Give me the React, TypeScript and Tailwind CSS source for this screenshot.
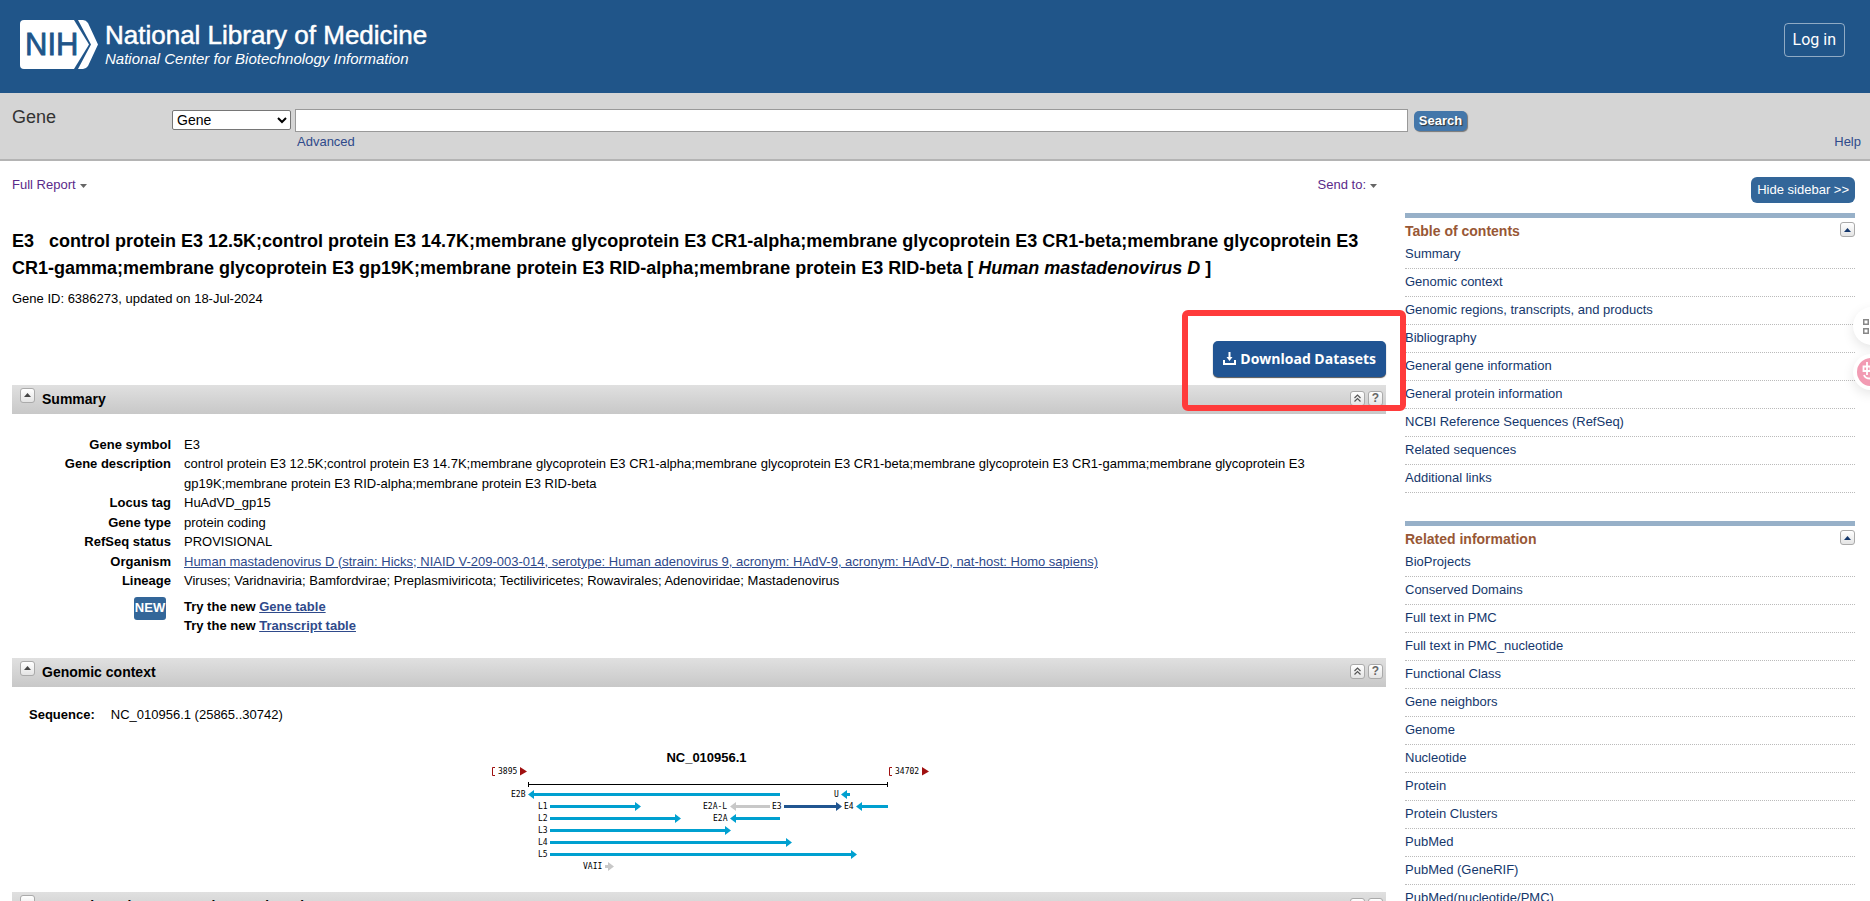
import { useState } from 'react'
import type { ReactNode } from 'react'

const TOC = [
  'Summary',
  'Genomic context',
  'Genomic regions, transcripts, and products',
  'Bibliography',
  'General gene information',
  'General protein information',
  'NCBI Reference Sequences (RefSeq)',
  'Related sequences',
  'Additional links',
]

const RELATED = [
  'BioProjects',
  'Conserved Domains',
  'Full text in PMC',
  'Full text in PMC_nucleotide',
  'Functional Class',
  'Gene neighbors',
  'Genome',
  'Nucleotide',
  'Protein',
  'Protein Clusters',
  'PubMed',
  'PubMed (GeneRIF)',
  'PubMed(nucleotide/PMC)',
]

const DESCRIPTION =
  'control protein E3 12.5K;control protein E3 14.7K;membrane glycoprotein E3 CR1-alpha;membrane glycoprotein E3 CR1-beta;membrane glycoprotein E3 CR1-gamma;membrane glycoprotein E3 gp19K;membrane protein E3 RID-alpha;membrane protein E3 RID-beta'

const CYAN = '#00a0d0'
const NAVY = '#205590'
const GREY = '#c8c8c8'

interface Gene {
  label: string
  labelX: number
  y: number
  from: number
  to: number
  color: string
}

// from -> to gives the strand direction
const GENES: Gene[] = [
  { label: 'E2B', labelX: 41, y: 64, from: 310, to: 58, color: CYAN },
  { label: 'U', labelX: 364, y: 64, from: 380, to: 371, color: CYAN },
  { label: 'L1', labelX: 68, y: 76, from: 80, to: 171, color: CYAN },
  { label: 'E2A-L', labelX: 233, y: 76, from: 300, to: 260, color: GREY },
  { label: 'E3', labelX: 302, y: 76, from: 314, to: 372, color: NAVY },
  { label: 'E4', labelX: 374, y: 76, from: 418, to: 386, color: CYAN },
  { label: 'L2', labelX: 68, y: 88, from: 80, to: 211, color: CYAN },
  { label: 'E2A', labelX: 243, y: 88, from: 310, to: 260, color: CYAN },
  { label: 'L3', labelX: 68, y: 100, from: 80, to: 261, color: CYAN },
  { label: 'L4', labelX: 68, y: 112, from: 80, to: 322, color: CYAN },
  { label: 'L5', labelX: 68, y: 124, from: 80, to: 387, color: CYAN },
  { label: 'VAII', labelX: 113, y: 136, from: 135, to: 144, color: GREY },
]

function GeneArrow({ gene }: { gene: Gene }) {
  const dir = gene.to > gene.from ? 1 : -1
  const neck = gene.to - dir * 6
  return (
    <g>
      <text x={gene.labelX} y={gene.y + 4} fill="#000">
        {gene.label}
      </text>
      <rect
        x={Math.min(gene.from, neck)}
        y={gene.y}
        width={Math.abs(neck - gene.from)}
        height={3}
        fill={gene.color}
      />
      <polygon
        points={`${neck},${gene.y - 3} ${gene.to},${gene.y + 1.5} ${neck},${gene.y + 6}`}
        fill={gene.color}
      />
    </g>
  )
}

function GenomeMap() {
  return (
    <svg width="470" height="150" viewBox="0 0 470 150" role="img" aria-label="NC_010956.1">
      <text
        x="236.5"
        y="33"
        textAnchor="middle"
        className="font-['Liberation_Sans',Arial,sans-serif] text-[13px] font-bold"
      >
        NC_010956.1
      </text>
      <g className="font-['DejaVu_Sans_Mono',monospace] text-[8px]">
        <path d="M25 38.5H22.5V46.5H25M422 38.5H419.5V46.5H422" fill="none" stroke="#a01010" />
        <path d="M50 38V46.500L57 42.500zM452 38V46.500L459 42.500z" fill="#a01010" />
        <text x="28" y="45">3895</text>
        <text x="425" y="45">34702</text>
        <path d="M58.500 53V58M417.500 53V58M58 55.500H418" fill="none" stroke="#000" />
        {GENES.map((gene) => (
          <GeneArrow key={gene.label} gene={gene} />
        ))}
      </g>
    </svg>
  )
}

function NihLogo() {
  return (
    <svg width="430" height="54" viewBox="0 0 430 54">
      <path d="M4 0H54L69 24.500L54 49H4Q0 49 0 45V4Q0 0 4 0z" fill="#fff" />
      <path d="M58 0H63Q66 0 68 3L78 24.500L68 46Q66 49 63 49H58L71 24.500z" fill="#fff" />
      <g className="font-['Liberation_Sans',Arial,sans-serif]">
        <text x="5" y="35" fill="#205589" stroke="#205589" strokeWidth="0.800" className="text-[31px]">
          NIH
        </text>
        <text x="85" y="24" fill="#fff" stroke="#fff" strokeWidth="0.500" className="text-[26px]">
          National Library of Medicine
        </text>
        <text x="85" y="44" fill="#fff" className="text-[15px] italic">
          National Center for Biotechnology Information
        </text>
      </g>
    </svg>
  )
}

const smallButton =
  'flex size-[15px] cursor-pointer items-center justify-center rounded-[3px] border border-[#aaa] bg-linear-to-b from-white to-[#e4e4e4]'

function CollapseButton({ label, onClick }: { label: string; onClick?: () => void }) {
  return (
    <button type="button" aria-label={label} onClick={onClick} className={smallButton}>
      <svg width="7" height="4" viewBox="0 0 7 4">
        <path d="M3.500 0L7 4H0z" fill="currentColor" />
      </svg>
    </button>
  )
}

function SectionHeader({ title, onToggle }: { title: string; onToggle: () => void }) {
  return (
    <div className="flex h-[29px] items-start bg-linear-to-b from-[#e0e0e0] to-[#c8c8c8] pt-[3px] pr-[3px] pl-2 text-[#444]">
      <CollapseButton label={`Toggle ${title}`} onClick={onToggle} />
      <h2 className="ml-[7px] pt-px text-sm leading-5 font-bold text-black">{title}</h2>
      <div className="ml-auto flex gap-[3px] pt-[3px]">
        <button type="button" aria-label="Go to top of page" className={smallButton}>
          <svg width="7" height="8" viewBox="0 0 7 8" fill="none" stroke="#555" strokeWidth="1.200">
            <path d="M0.500 4L3.500 1L6.500 4M0.500 7.500L3.500 4.500L6.500 7.500" />
          </svg>
        </button>
        <button type="button" aria-label="Help" className={`${smallButton} text-xs leading-none font-bold text-[#666]`}>
          ?
        </button>
      </div>
    </div>
  )
}

function SidebarSection({ title, items }: { title: string; items: string[] }) {
  const [open, setOpen] = useState(true)
  return (
    <section className="border-t-[5px] border-[#97b0c8] text-[#14376c]">
      <div className="flex items-start justify-between pt-1">
        <h3 className="text-sm leading-[19px] font-bold text-[#985735]">{title}</h3>
        <CollapseButton label={`Toggle ${title}`} onClick={() => setOpen(!open)} />
      </div>
      {open && (
        <ul>
          {items.map((item) => (
            <li key={item} className="h-7 border-b border-dotted border-[#bbb] leading-[25px]">
              <a href="#" className="hover:underline">
                {item}
              </a>
            </li>
          ))}
        </ul>
      )}
    </section>
  )
}

function Row({ label, children }: { label: string; children: ReactNode }) {
  return (
    <div className="flex gap-[13px]">
      <dt className="w-[159px] shrink-0 text-right font-bold">{label}</dt>
      <dd className="flex-1">{children}</dd>
    </div>
  )
}

const Caret = () => (
  <svg className="ml-1 inline-block" width="7" height="4" viewBox="0 0 7 4">
    <path d="M0 0H7L3.500 4z" fill="#666" />
  </svg>
)

export default function App() {
  const [query, setQuery] = useState('')
  const [summaryOpen, setSummaryOpen] = useState(true)
  const [contextOpen, setContextOpen] = useState(true)

  return (
    <div className="relative h-screen overflow-hidden bg-white font-['Liberation_Sans',Arial,sans-serif] text-[13px] leading-normal text-black">
      <header className="flex h-[93px] items-start justify-between bg-[#205589] pt-5 pr-[25px] pl-5 text-white">
        <a href="#">
          <NihLogo />
        </a>
        <button
          type="button"
          className="mt-[3px] h-[34px] cursor-pointer rounded border border-white/50 px-2 font-['Roboto',sans-serif] text-base"
        >
          Log in
        </button>
      </header>

      {/* search bar */}
      <form
        className="flex h-[68px] items-start border-b-2 border-[#b4b4b4] bg-[#d5d5d5] pt-4 pr-[9px] pl-3"
        onSubmit={(e) => e.preventDefault()}
      >
        <span className="w-40 shrink-0 text-lg leading-4 text-[#333]">Gene</span>
        <select
          aria-label="Database"
          className="mt-px h-5 w-[119px] shrink-0 rounded-[2px] border border-[#767676] bg-white text-sm leading-4"
        >
          <option>Gene</option>
        </select>
        <div className="ml-1 flex flex-1 flex-col">
          <input
            aria-label="Search term"
            value={query}
            onChange={(e) => setQuery(e.target.value)}
            className="h-[23px] w-full border border-[#999] bg-white px-1 text-sm outline-none"
          />
          <a href="#" className="ml-[2px] self-start leading-5 text-[#2f4a8b]">
            Advanced
          </a>
        </div>
        <button
          type="submit"
          className="mt-[2px] ml-[6px] h-5 w-[53px] cursor-pointer rounded-[5px] bg-[#4477aa] text-[13px] leading-5 font-bold text-white shadow-[1px_1px_1px_#777] text-shadow-[1px_1px_1px_#333]"
        >
          Search
        </button>
        <a href="#" className="mt-[23px] w-[394px] text-right leading-5 text-[#2f4a8b]">
          Help
        </a>
      </form>

      <div className="flex gap-[19px] pr-[15px] pl-3">
        <main className="min-w-0 flex-1">
          <div className="flex justify-between pt-[14px] pr-[9px] leading-5 text-[#5a2a8a]">
            <button type="button" className="cursor-pointer">
              Full Report
              <Caret />
            </button>
            <button type="button" className="cursor-pointer">
              Send to:
              <Caret />
            </button>
          </div>

          <h1 className="mt-[33px] text-lg leading-[27px] font-bold">
            E3 &nbsp; {DESCRIPTION} [ <em>Human mastadenovirus D</em> ]
          </h1>
          <p className="mt-[7px]">Gene ID: 6386273, updated on 18-Jul-2024</p>

          <div className="relative mt-8 mb-2 flex justify-end">
            <button
              type="button"
              className="flex h-9 cursor-pointer items-center gap-1 rounded-[5px] bg-[#205493] px-[10px] font-['Open_Sans',sans-serif] text-sm font-bold text-white shadow-[0_1px_1px_#555]"
            >
              <svg width="13" height="13" viewBox="0 0 13 13" fill="none" stroke="#fff" strokeWidth="2">
                <path d="M6.500 0V6M1 8V12H12V8" />
                <path d="M3.500 5H9.500L6.500 9z" fill="#fff" stroke="none" />
              </svg>
              Download Datasets
            </button>
            {/* highlight frame */}
            <div className="pointer-events-none absolute -top-[31px] -right-5 z-10 h-[101px] w-56 rounded-md border-[6px] border-[#ff3b3b]" />
          </div>

          <section>
            <SectionHeader title="Summary" onToggle={() => setSummaryOpen(!summaryOpen)} />
            {summaryOpen && (
              <div className="pt-[21px] pr-[60px] pb-[22px]">
                <dl>
                  <Row label="Gene symbol">E3</Row>
                  <Row label="Gene description">{DESCRIPTION}</Row>
                  <Row label="Locus tag">HuAdVD_gp15</Row>
                  <Row label="Gene type">protein coding</Row>
                  <Row label="RefSeq status">PROVISIONAL</Row>
                  <Row label="Organism">
                    <a href="#" className="text-[#2f4a8b] underline">
                      Human mastadenovirus D (strain: Hicks; NIAID V-209-003-014, serotype: Human adenovirus 9, acronym: HAdV-9,
                      acronym: HAdV-D, nat-host: Homo sapiens)
                    </a>
                  </Row>
                  <Row label="Lineage">
                    Viruses; Varidnaviria; Bamfordvirae; Preplasmiviricota; Tectiliviricetes; Rowavirales; Adenoviridae;
                    Mastadenovirus
                  </Row>
                </dl>
                <div className="mt-[6px] flex gap-[18px] font-bold">
                  <div className="flex w-[154px] justify-end">
                    <span className="h-[23px] w-8 rounded-[3px] bg-[#336699] text-center leading-[21px] text-white">NEW</span>
                  </div>
                  <div>
                    <p>
                      Try the new{' '}
                      <a href="#" className="text-[#2f4a8b] underline">
                        Gene table
                      </a>
                    </p>
                    <p>
                      Try the new{' '}
                      <a href="#" className="text-[#2f4a8b] underline">
                        Transcript table
                      </a>
                    </p>
                  </div>
                </div>
              </div>
            )}
          </section>

          <section>
            <SectionHeader title="Genomic context" onToggle={() => setContextOpen(!contextOpen)} />
            {contextOpen && (
              <div className="pt-[18px] pb-[13px]">
                <p className="flex gap-4 pl-[17px]">
                  <b>Sequence:</b>
                  <span>NC_010956.1 (25865..30742)</span>
                </p>
                <div className="mt-[5px] flex justify-center pl-3">
                  <GenomeMap />
                </div>
              </div>
            )}
          </section>

          <SectionHeader title="Genomic regions, transcripts, and products" onToggle={() => {}} />
        </main>

        <aside className="flex w-[450px] shrink-0 flex-col pt-4">
          <button
            type="button"
            className="mb-[10px] h-[26px] cursor-pointer self-end rounded-[6px] bg-[#336699] px-[6px] text-[13px] text-white"
          >
            Hide sidebar &gt;&gt;
          </button>
          <SidebarSection title="Table of contents" items={TOC} />
          <div className="h-7" />
          <SidebarSection title="Related information" items={RELATED} />
        </aside>
      </div>

      {/* floating tools at the window edge */}
      <div className="absolute top-[307px] -right-[21px] flex size-[38px] items-center rounded-full bg-white pl-[10px] shadow-[0_4px_12px_rgba(0,0,0,0.1)]">
        <svg width="15" height="15" viewBox="0 0 15 15" fill="none" stroke="#888" strokeWidth="1.500">
          <path d="M0.750 0.750H5.250V5.250H0.750zM9.750 0.750H14.250V5.250H9.750zM0.750 9.750H5.250V14.250H0.750zM9.750 9.750H14.250V14.250H9.750z" />
        </svg>
      </div>
      <div className="absolute top-[354px] -right-[19px] flex size-9 items-center justify-center rounded-full bg-white shadow-[0_4px_12px_rgba(0,0,0,0.1)]">
        <svg width="28" height="28" viewBox="0 0 28 28" fill="none" stroke="#fff" strokeWidth="1.800">
          <circle cx="14" cy="14" r="14" fill="#f29bb3" stroke="none" />
          <path d="M6.500 8.500H13.500V13H6.500zM10 4V17M7 17Q8 20.500 13 20.500" />
        </svg>
      </div>
    </div>
  )
}
